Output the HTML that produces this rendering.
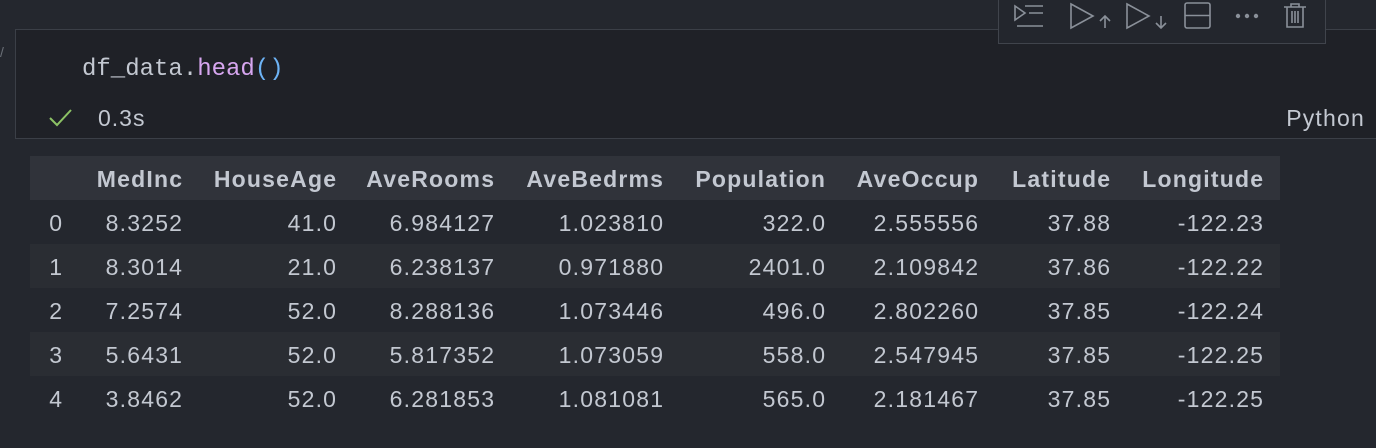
<!DOCTYPE html>
<html><head><style>
html,body{margin:0;padding:0;}
body{width:1376px;height:448px;background:#24272e;position:relative;overflow:hidden;font-family:"Liberation Sans",sans-serif;color:#c3c8d1;}
.cell{position:absolute;left:15px;top:29px;width:1370px;height:108px;border:1px solid #3b3f47;background:#1f2127;}
.code{position:absolute;left:82px;top:56px;font-family:"Liberation Mono",monospace;font-size:24px;color:#c3c8d1;}
.tb{position:absolute;left:998px;top:-2px;width:326px;height:44px;border:1px solid #40444c;background:#23262d;}
.r{position:absolute;height:44px;left:30px;width:1250px;}
.t{position:absolute;font-size:23px;letter-spacing:1.2px;margin-right:-1.2px;line-height:44px;text-align:right;white-space:nowrap;}
</style></head><body>
<div style="position:absolute;left:0;top:44px;font-size:14px;color:#6b7078">/</div>
<div class="cell"></div>
<div class="code">df_data.<span style="color:#d7a6f0">head</span><span style="color:#6db3f5">()</span></div>
<svg style="position:absolute;left:48px;top:107px" width="26" height="22"><path d="M2 11 L9 18 L23 3" stroke="#8cc265" stroke-width="2" fill="none"/></svg>
<div style="position:absolute;left:98px;top:105px;font-size:23px;letter-spacing:1px;">0.3s</div>
<div style="position:absolute;right:11px;top:105px;font-size:23px;letter-spacing:1.2px;">Python</div>
<div class="tb">
<svg width="326" height="44" style="position:absolute;left:0;top:0" fill="none" stroke="#8a9099" stroke-width="1.6">
<path d="M16 7 L26 14 L16 21 Z"/><path d="M26 7h18M30 14h14M18 27h26"/>
<path d="M72 5 L94 17 L72 29 Z"/><path d="M106 29v-12M101 22l5-5 5 5"/>
<path d="M128 5 L150 17 L128 29 Z"/><path d="M162 17v12M157 24l5 5 5-5"/>
<rect x="186" y="4" width="25" height="25" rx="2"/><path d="M186 16.5h25"/>
<circle cx="239" cy="17" r="1.4" fill="#8a9099"/><circle cx="248" cy="17" r="1.4" fill="#8a9099"/><circle cx="257" cy="17" r="1.4" fill="#8a9099"/>
<path d="M285 8h22M292 8v-3h8v3M288 8v20h16v-20M293 12v12M296 12v12M299 12v12"/>
</svg></div>
<div class="r" style="top:156px;background:#30333a"></div>
<div class="r" style="top:244px;background:#2a2d33"></div>
<div class="r" style="top:332px;background:#2a2d33"></div>
<div id="tbl"></div>
<script>
var rights=[62,182,336,494,663,825,978,1110,1263];
var rows=[["","MedInc","HouseAge","AveRooms","AveBedrms","Population","AveOccup","Latitude","Longitude"],
["0","8.3252","41.0","6.984127","1.023810","322.0","2.555556","37.88","-122.23"],
["1","8.3014","21.0","6.238137","0.971880","2401.0","2.109842","37.86","-122.22"],
["2","7.2574","52.0","8.288136","1.073446","496.0","2.802260","37.85","-122.24"],
["3","5.6431","52.0","5.817352","1.073059","558.0","2.547945","37.85","-122.25"],
["4","3.8462","52.0","6.281853","1.081081","565.0","2.181467","37.85","-122.25"]];
var h="";
rows.forEach(function(r,i){var top=157+i*44;r.forEach(function(c,j){
h+='<div class="t" style="top:'+top+'px;right:'+(1376-rights[j])+'px;'+(i==0?'font-weight:bold;':'')+'">'+c+'</div>';});});
document.getElementById('tbl').innerHTML=h;
</script>
</body></html>
